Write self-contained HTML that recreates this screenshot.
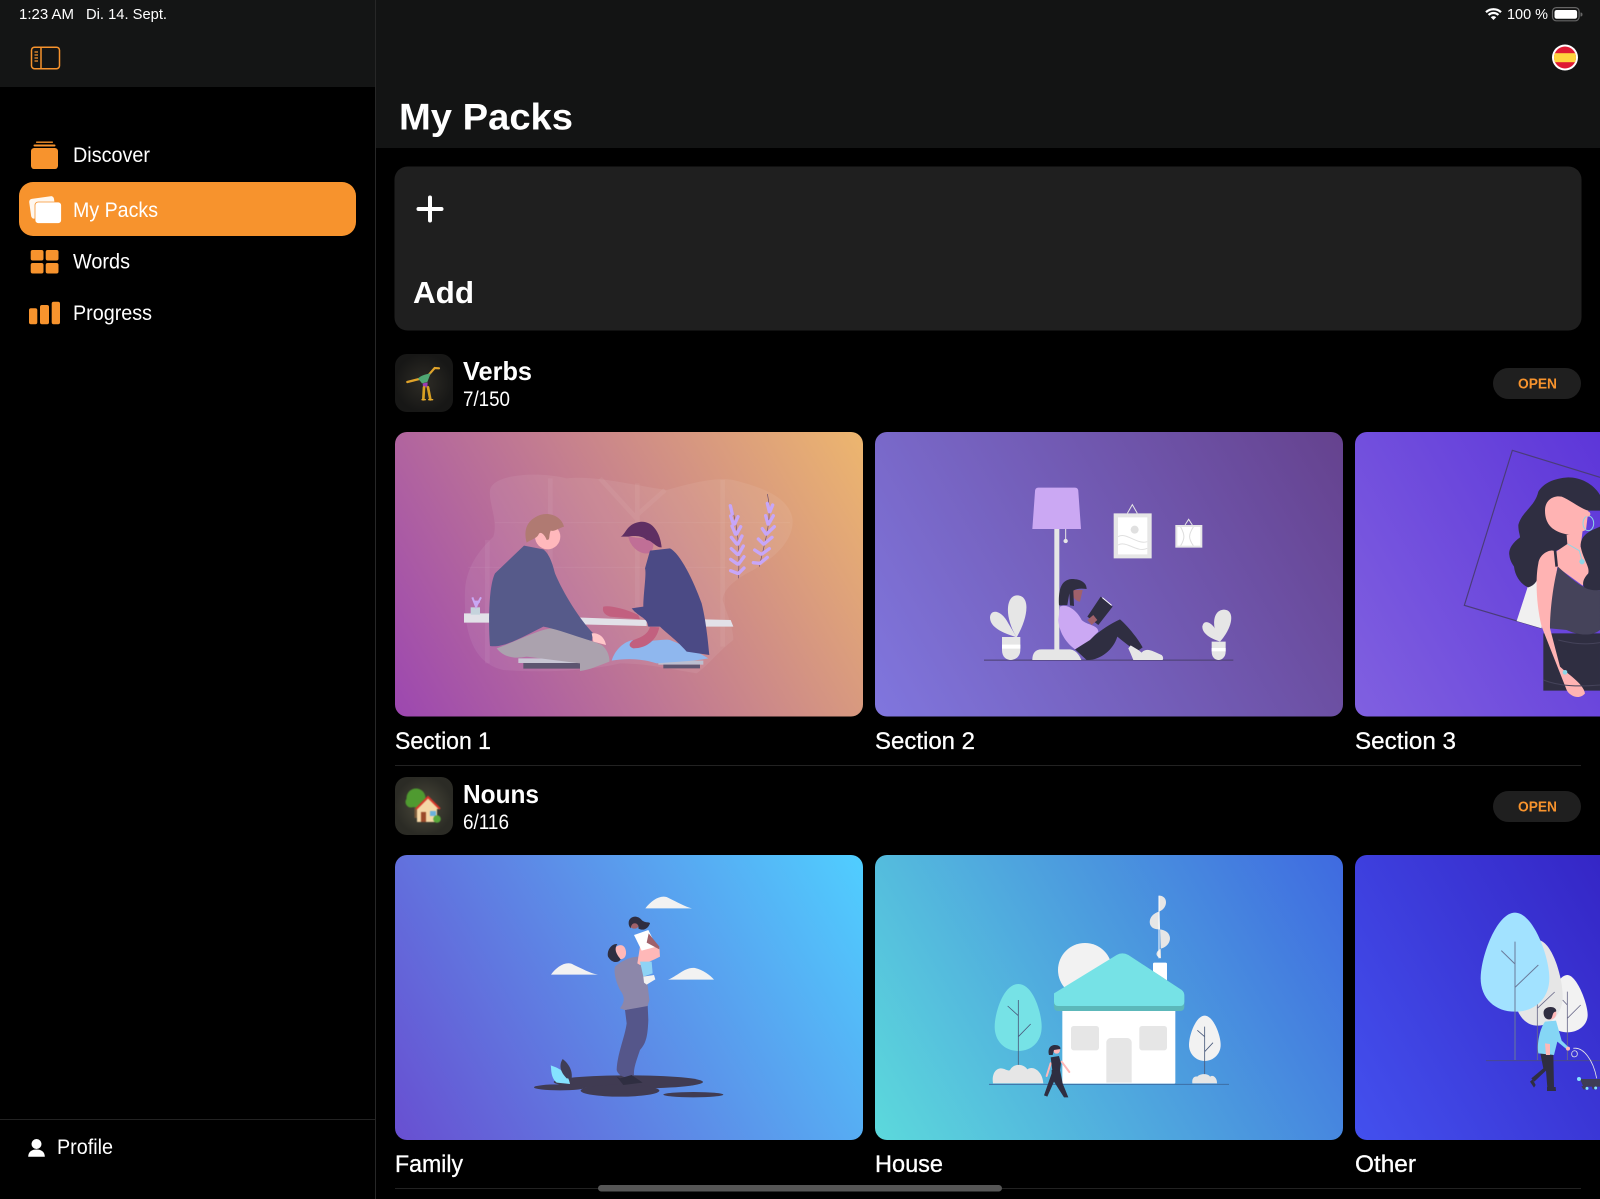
<!DOCTYPE html>
<html lang="en"><head><meta charset="utf-8"><title>My Packs</title>
<style>
html,body{margin:0;padding:0;background:#000;width:1600px;height:1199px;overflow:hidden}
svg{display:block}
text{font-family:"Liberation Sans",sans-serif;fill:#fff}
.b{font-weight:700}
.m{stroke:#fff;stroke-width:.3px}
.il{filter:blur(.45px)}
</style></head><body>
<svg width="1600" height="1199" viewBox="0 0 1600 1199" xmlns="http://www.w3.org/2000/svg">
<defs>
<linearGradient id="g1" gradientUnits="userSpaceOnUse" x1="395" y1="716" x2="869" y2="442"><stop offset="0" stop-color="#9c47b0"/><stop offset="1" stop-color="#edb66e"/></linearGradient>
<linearGradient id="g2" gradientUnits="userSpaceOnUse" x1="875" y1="716" x2="1349" y2="442"><stop offset="0" stop-color="#8076de"/><stop offset="1" stop-color="#65428e"/></linearGradient>
<linearGradient id="g3" gradientUnits="userSpaceOnUse" x1="1355" y1="716" x2="1829" y2="442"><stop offset="0" stop-color="#8060e0"/><stop offset="1" stop-color="#4a1fd5"/></linearGradient>
<linearGradient id="g4" gradientUnits="userSpaceOnUse" x1="395" y1="1140" x2="869" y2="866"><stop offset="0" stop-color="#684fd1"/><stop offset="1" stop-color="#50ceff"/></linearGradient>
<linearGradient id="g5" gradientUnits="userSpaceOnUse" x1="875" y1="1140" x2="1349" y2="866"><stop offset="0" stop-color="#5cd9dc"/><stop offset="1" stop-color="#3f6ae0"/></linearGradient>
<linearGradient id="g6" gradientUnits="userSpaceOnUse" x1="1355" y1="1140" x2="1829" y2="866"><stop offset="0" stop-color="#4350ee"/><stop offset="1" stop-color="#2d0fb0"/></linearGradient>
<radialGradient id="t1"><stop offset="0" stop-color="#2e2c26"/><stop offset="1" stop-color="#171716"/></radialGradient>
<radialGradient id="t2"><stop offset="0" stop-color="#4c4a3c"/><stop offset="1" stop-color="#2b2b25"/></radialGradient>
<clipPath id="fl"><circle cx="1565" cy="57.5" r="11"/></clipPath>
</defs>

<!-- headers -->
<rect x="0" y="0" width="375" height="87" fill="#141515"/>
<rect x="376" y="0" width="1224" height="148" fill="#131414"/>
<rect x="375" y="0" width="1" height="1199" fill="#272727"/>
<rect x="0" y="1119" width="375" height="1" fill="#222"/>

<!-- status bar -->
<text x="19" y="19" font-size="15" textLength="55" lengthAdjust="spacingAndGlyphs">1:23 AM</text>
<text x="86" y="19" font-size="15" textLength="81" lengthAdjust="spacingAndGlyphs">Di. 14. Sept.</text>
<text x="1507" y="19" font-size="15" textLength="41" lengthAdjust="spacingAndGlyphs">100 %</text>
<g fill="none" stroke="#fff" stroke-width="2.2">
<path d="M1486 12.2a11 11 0 0 1 15 0"/><path d="M1488.6 15a7 7 0 0 1 9.8 0"/></g>
<path d="M1490.8 17.3a3.6 3.6 0 0 1 5.4 0l-2.7 2.7z" fill="#fff"/>
<rect x="1552.5" y="7.6" width="26.6" height="13.2" rx="3.8" fill="none" stroke="#666" stroke-width="1.2"/>
<rect x="1554.500" y="10" width="22.6" height="8.800" rx="2.2" fill="#fff"/>
<path d="M1580.5 12.5a2 2 0 0 1 0 4z" fill="#666"/>

<!-- sidebar toggle -->
<rect x="31.5" y="47.2" width="28" height="21.5" rx="3" fill="none" stroke="#f7932d" stroke-width="1.5"/>
<path d="M41 47v22" stroke="#f7932d" stroke-width="1.5"/>
<path d="M34.5 52h3.5M34.5 55h3.5M34.5 58h3.5M34.5 61h3.5" stroke="#f7932d" stroke-width="1.2"/>

<!-- flag -->
<circle cx="1565" cy="57.5" r="13" fill="#fff"/>
<g clip-path="url(#fl)"><rect x="1553" y="46" width="24" height="24" fill="#de1a33"/><rect x="1553" y="53.200" width="24" height="9" fill="#ffd43e"/></g>

<!-- title -->
<text x="399" y="129.5" class="b" font-size="37" textLength="174" lengthAdjust="spacingAndGlyphs">My Packs</text>

<!-- sidebar nav -->
<rect x="19" y="182" width="337" height="54" rx="14" fill="#f7932d"/>
<rect x="36" y="141.5" width="17" height="1.4" rx=".7" fill="#f7932d"/>
<rect x="33.5" y="144.5" width="22" height="2" rx="1" fill="#f7932d"/>
<rect x="31" y="148" width="27" height="21" rx="3.2" fill="#f7932d"/>
<text x="73" y="162" font-size="21" textLength="77" lengthAdjust="spacingAndGlyphs">Discover</text>
<rect x="30" y="197.5" width="25" height="20" rx="3" fill="#fff" opacity=".92" transform="rotate(-8 42 207)"/>
<rect x="35" y="202" width="26.5" height="21.5" rx="3.2" fill="#fff" stroke="#f7932d" stroke-width=".8"/>
<text x="73" y="217" font-size="21" fill="#fff" textLength="85" lengthAdjust="spacingAndGlyphs">My Packs</text>
<g fill="#f7932d">
<rect x="30.7" y="250" width="12.8" height="10.5" rx="2"/><rect x="45.7" y="250" width="12.8" height="10.5" rx="2"/>
<rect x="30.7" y="263" width="12.8" height="10.5" rx="2"/><rect x="45.7" y="263" width="12.8" height="10.5" rx="2"/>
<rect x="29" y="308.3" width="8.3" height="16" rx="2"/><rect x="40" y="305" width="9" height="19.3" rx="2"/><rect x="51.7" y="301.7" width="8.3" height="22.6" rx="2"/>
</g>
<text x="73" y="268.500" font-size="21" textLength="57" lengthAdjust="spacingAndGlyphs">Words</text>
<text x="73" y="320" font-size="21" textLength="79" lengthAdjust="spacingAndGlyphs">Progress</text>

<!-- profile -->
<circle cx="36.5" cy="1144" r="5" fill="#fff"/>
<path d="M28.2 1156.7c0-5 3.6-7.2 8.3-7.2s8.3 2.2 8.3 7.2z" fill="#fff"/>
<text x="57" y="1154" font-size="21" textLength="56" lengthAdjust="spacingAndGlyphs">Profile</text>

<!-- add card -->
<rect x="394.5" y="166.5" width="1187" height="164" rx="13" fill="#1f1f1f"/>
<path d="M430 197.500v23M418.500 209h23" stroke="#fff" stroke-width="4" stroke-linecap="round"/>
<text x="413" y="303" class="b" font-size="31" textLength="61" lengthAdjust="spacingAndGlyphs">Add</text>

<!-- Verbs row -->
<rect x="395" y="354" width="58" height="58" rx="12" fill="url(#t1)"/>
<g transform="translate(390 350) scale(.33333)" class="il" fill="none" stroke-linecap="round">
<path d="M52 96L92 86" stroke="#e0a32a" stroke-width="7"/>
<path d="M115 76L134 54L147 55" stroke="#e0a32a" stroke-width="6.500"/>
<path d="M84 85C95 75 110 72 122 70L112 96L96 100Z" fill="#4fa873"/>
<path d="M98 100L113 97L112 112L99 112Z" fill="#9a3eb0"/>
<path d="M102 112L100 148M114 112L121 148" stroke="#d8a022" stroke-width="8"/>
<path d="M96 149H106M116 149H128" stroke="#e6aa2c" stroke-width="4"/>
</g>
<text x="463" y="380" class="b" font-size="26" textLength="69" lengthAdjust="spacingAndGlyphs">Verbs</text>
<text x="463" y="406" font-size="21" textLength="47" lengthAdjust="spacingAndGlyphs">7/150</text>
<rect x="1493" y="368" width="88" height="31" rx="15.5" fill="#1f1f1f"/>
<text x="1518" y="388.500" class="b" font-size="14.500" style="fill:#f7932d" textLength="39" lengthAdjust="spacingAndGlyphs">OPEN</text>

<!-- Card 1 -->
<rect x="395" y="432" width="468" height="284.500" rx="12" fill="url(#g1)"/>
<g transform="translate(380 340) scale(.33333)" class="il">
<path d="M330 450C340 400 480 395 560 415C650 405 780 440 860 450C930 430 1010 410 1060 420C1140 440 1230 470 1238 540C1240 600 1190 650 1120 690C1060 720 1030 750 1028 780C1040 820 1060 860 1060 900C1020 930 980 980 950 1000C880 990 800 970 720 970C640 990 500 1000 370 990C280 970 250 880 255 750C260 670 310 620 340 590C355 540 325 490 330 450Z" fill="#fff" opacity=".07"/>
<g stroke="#fff" stroke-opacity=".05" stroke-width="14" fill="none"><path d="M511 415V830M772 430V830M1028 420V920M322 600V970M660 415L765 530L855 450"/><path d="M345 548H1230M265 682H1040" stroke-width="3"/></g>
<path d="M252 820H330V848H252Z" fill="#e2e1e8"/>
<path d="M475 828L800 840V858L475 850ZM975 838L1052 840L1060 860H975Z" fill="#e2e1e8"/>
<path d="M272 802H300V824H272Z" fill="#c5d3dc"/>
<path d="M277 772L288 800L303 772M290 800V782M280 785L300 785" stroke="#c9a8f4" stroke-width="6" fill="none"/>
<path d="M415 955H613V969H415Z" fill="#c8c6d4"/><path d="M430 969H600V986H430Z" fill="#5d5570"/>
<path d="M835 962H970V974H835Z" fill="#bcbfd0"/><path d="M850 974H960V985H850Z" fill="#5d5570"/>
<path d="M350 925C420 900 480 865 520 865C570 880 630 900 665 915C680 925 690 950 688 965C660 975 630 990 600 993L600 970L440 950C400 958 370 950 350 925Z" fill="#aba2ae"/>
<circle cx="503" cy="590" r="38" fill="#ffb8bc"/>
<path d="M432 617L345 700C325 740 325 860 330 918C370 925 430 890 490 860C540 870 590 890 635 903L640 880C600 840 550 760 525 700C515 660 505 640 490 628Z" fill="#565a8a"/>
<path d="M635 880C650 878 672 885 678 915L640 905Z" fill="#ffc6c9"/>
<path d="M440 608C430 570 440 540 480 525C510 515 545 530 552 560C535 565 525 575 512 572C505 590 512 600 500 600C495 585 480 570 475 585C470 595 450 600 440 608Z" fill="#b07a72"/>
<path d="M670 800C690 795 740 808 775 825L780 838L690 830C675 825 665 815 670 800Z" fill="#c2607f"/>
<path d="M745 590C750 620 780 645 805 640C820 635 825 610 815 598Z" fill="#c06f96"/>
<path d="M722 590C735 585 740 555 770 548C810 535 840 570 845 622C830 625 815 600 800 600C790 590 770 585 745 590Z" fill="#5f2f63"/>
<path d="M695 962C705 930 730 905 760 900C800 910 850 895 870 900C920 920 960 940 985 955C930 965 880 965 830 970C780 955 740 955 695 962Z" fill="#8fb7ee"/>
<path d="M810 632L870 625C900 640 940 720 965 790C980 850 985 920 988 945L920 935C890 900 860 880 840 860L805 860C800 830 780 835 755 805L790 800C790 760 800 700 795 685Z" fill="#4b4a85"/>
<path d="M810 860L838 862C830 900 800 925 760 925C745 920 745 910 760 900C790 890 805 880 810 860Z" fill="#c2607f"/>
<path d="M1075 715C1080 640 1075 560 1052 492M1138 680C1150 620 1180 540 1162 462" stroke="#6e4f70" stroke-width="2" fill="none"/>
<path d="M1072 700L1052 692M1076 700L1092 684M1072 672L1052 658M1076 672L1092 650M1072 643L1054 626M1076 643L1090 618M1070 612L1054 592M1074 612L1086 588M1066 582L1056 558M1070 582L1082 560M1060 552L1052 528M1064 552L1074 530M1057 522L1051 497M1138 670L1120 668M1140 670L1162 652M1142 642L1124 630M1146 642L1168 626M1150 612L1135 597M1152 612L1176 592M1158 582L1147 566M1160 582L1183 560M1164 552L1157 527M1166 552L1180 527M1168 515L1162 490M1170 515L1178 495" stroke="#c7a6f8" stroke-width="10" stroke-linecap="round"/>
</g>
<text x="395" y="749" font-size="24" class="m" textLength="96" lengthAdjust="spacingAndGlyphs">Section 1</text>

<!-- Card 2 -->
<rect x="875" y="432" width="468" height="284.500" rx="12" fill="url(#g2)"/>
<g transform="translate(860 420) scale(.33333)" class="il">
<path d="M372 720.500H1120" stroke="#4a3f6e" stroke-width="3"/>
<path d="M535 203H645Q655 203 655 215L663 327H517L525 215Q525 203 535 203Z" fill="#cba8f3"/>
<path d="M583 327H598V692H583Z" fill="#e6e6e6"/><path d="M617 327V358" stroke="#e6e6e6" stroke-width="3"/><circle cx="617" cy="363" r="6.500" fill="#e6e6e6"/>
<path d="M517 720C517 700 525 688 545 688H630C650 690 660 710 664 720Z" fill="#e6e6e6"/>
<path d="M802 280L817 254L832 280" stroke="#e6e6e6" stroke-width="3" fill="none"/>
<path d="M761 280H875V415H761Z" fill="#e6e6e6"/><path d="M774 292H862V403H774Z" fill="#fff"/>
<circle cx="824" cy="329" r="12" fill="#e0e0e0"/>
<path d="M774 350C800 335 830 375 862 365M774 375C800 360 830 400 862 385" stroke="#e0e0e0" stroke-width="3" fill="none"/>
<path d="M975 315L986 298L997 315" stroke="#e6e6e6" stroke-width="3" fill="none"/>
<path d="M946 315H1027V383H946Z" fill="#e6e6e6"/><path d="M952 321H1021V377H952Z" fill="#fff"/>
<path d="M962 321C975 345 975 355 962 377M1000 321C985 345 985 355 1000 377" stroke="#ddd" stroke-width="3" fill="none"/>
<path d="M470 652C432 590 438 528 470 526C512 525 506 590 470 652Z" fill="#e6e6e6"/>
<path d="M470 652C435 640 390 625 390 592C392 565 425 570 445 610Z" fill="#e6e6e6"/>
<path d="M426 651H481V690C481 710 465 720 453 720C438 720 426 710 426 690Z" fill="#e6e6e6"/><path d="M426 674H481V686H426Z" fill="#fff"/>
<path d="M1080 665C1052 620 1058 570 1092 569C1125 570 1120 620 1080 665Z" fill="#e6e6e6"/>
<path d="M1080 665C1052 655 1027 642 1027 620C1030 598 1052 603 1068 630Z" fill="#e6e6e6"/>
<path d="M1055 665H1097V695C1097 712 1085 720 1076 720C1065 720 1055 712 1055 695Z" fill="#e6e6e6"/><path d="M1055 684H1097V694H1055Z" fill="#fff"/>
<path d="M645 688C690 660 730 620 780 598C800 615 830 650 848 682L830 695C810 680 790 665 772 650C760 690 720 722 680 720Z" fill="#2f2e41"/>
<path d="M812 676L835 690L845 698C860 680 880 695 905 705Q912 712 908 720H820Q812 700 805 685Z" fill="#e6e6e6"/>
<path d="M636 510C632 530 650 545 660 545L668 510Z" fill="#a0616a"/>
<path d="M597 556C595 515 600 480 635 477C665 477 680 490 680 507C665 505 650 505 640 512L642 558L630 556L628 520L622 555Z" fill="#2f2e41"/>
<path d="M600 560C620 550 650 570 665 600C680 615 715 615 715 635L690 660L645 688C620 670 598 640 595 600Z" fill="#cba8f3"/>
<path d="M682 590L722 530L758 560L715 615Z" fill="#2f2e41"/><path d="M727 533L755 556" stroke="#fff" stroke-width="3"/>
<path d="M682 600L700 585L712 600L695 615Z" fill="#a0616a"/>
</g>
<text x="875" y="749" font-size="24" class="m" textLength="100" lengthAdjust="spacingAndGlyphs">Section 2</text>

<!-- Card 3 -->
<path d="M1600 432H1367a12 12 0 0 0-12 12V704.500a12 12 0 0 0 12 12H1600Z" fill="url(#g3)"/>
<g transform="translate(1340 420) scale(.33333)" class="il">
<path d="M780 172L517 91L373 556L605 625" fill="none" stroke="#4a3c78" stroke-width="3.500"/>
<path d="M565 495L530 603L605 625L610 470Z" fill="#f0f0f0"/>
<path d="M610 640V812H780V640Z" fill="#2f2e41"/>
<path d="M780 225C760 190 720 172 685 172C640 175 610 190 595 215C585 260 545 275 535 315C535 335 540 345 540 352C515 370 505 390 508 405C510 425 520 435 522 440C525 470 545 495 565 502C590 495 600 470 595 440C610 395 650 395 685 378L745 272L780 272Z" fill="#2f2e41"/>
<path d="M680 345L728 330L722 380C740 420 750 440 745 460L728 497L650 440L648 395L682 372Z" fill="#ffb3b3"/>
<path d="M615 272C615 240 640 225 665 230C690 240 720 265 745 272L738 330C720 336 705 345 680 343C640 335 615 315 615 272Z" fill="#ffb3b3"/>
<path d="M780 320C760 330 720 340 722 380C730 420 750 440 745 460C725 480 725 500 740 510C760 515 780 510 780 510Z" fill="#2f2e41"/>
<path d="M595 430C600 395 640 385 645 395L652 440L630 625L660 740C680 760 730 790 735 820C720 840 690 830 680 810L605 620C590 560 585 480 595 430Z" fill="#ffb3b3"/>
<path d="M654 440C680 465 710 490 730 500C750 515 780 510 780 510V630C750 655 700 640 680 630L630 625C630 570 640 490 654 440Z" fill="#45435a"/>
<path d="M645 390L650 440" stroke="#2f2e41" stroke-width="8"/>
<path d="M780 668C740 675 700 672 655 660M610 780C660 800 720 800 780 795" stroke="#45435a" stroke-width="3" fill="none"/>
<path d="M683 372L718 392L726 422" stroke="#8ed6e6" stroke-width="3" fill="none"/><circle cx="726" cy="425" r="8" fill="#8ed6e6"/>
<ellipse cx="745" cy="310" rx="16" ry="22" fill="none" stroke="#8ed6e6" stroke-width="3"/>
<circle cx="743" cy="282" r="8" fill="#ffb3b3"/><circle cx="675" cy="757" r="7" fill="#8ed6e6"/>
</g>
<text x="1355" y="749" font-size="24" class="m" textLength="101" lengthAdjust="spacingAndGlyphs">Section 3</text>

<rect x="395" y="765" width="1186" height="1" fill="#222"/>

<!-- Nouns row -->
<rect x="395" y="777" width="58" height="58" rx="12" fill="url(#t2)"/>
<g class="il">
<circle cx="416" cy="798" r="9.500" fill="#4f9a30"/><circle cx="411" cy="802" r="5.500" fill="#4f9a30"/>
<path d="M416 808v10" stroke="#7a5a3a" stroke-width="3"/>
<path d="M417 809L428 797L440 809H437V822H417Z" fill="#f5d7a6"/>
<path d="M416 809L428 797L440 809" fill="none" stroke="#d8352a" stroke-width="2"/>
<path d="M421 812H426V822H421Z" fill="#9b4a2a"/><path d="M430 811H436V816H430Z" fill="#6ab0dc"/>
<circle cx="437" cy="819" r="3.800" fill="#57a83a"/>
</g>
<text x="463" y="803" class="b" font-size="26" textLength="76" lengthAdjust="spacingAndGlyphs">Nouns</text>
<text x="463" y="829" font-size="21" textLength="46" lengthAdjust="spacingAndGlyphs">6/116</text>
<rect x="1493" y="791" width="88" height="31" rx="15.500" fill="#1f1f1f"/>
<text x="1518" y="811.500" class="b" font-size="14.500" style="fill:#f7932d" textLength="39" lengthAdjust="spacingAndGlyphs">OPEN</text>

<!-- Card 4 -->
<rect x="395" y="855" width="468" height="285" rx="12" fill="url(#g4)"/>
<g transform="translate(380 760) scale(.33333)" class="il">
<path d="M796 445C815 420 845 400 868 415C890 425 915 440 936 445Z" fill="#f2f2f2"/>
<path d="M513 644C530 620 560 600 582 615C605 625 630 640 654 644Z" fill="#f2f2f2"/>
<path d="M864 659C890 650 915 620 945 624C970 630 990 645 1002 659Z" fill="#f2f2f2"/>
<g fill="#403b52"><ellipse cx="745" cy="966" rx="224" ry="20"/><ellipse cx="540" cy="982" rx="78" ry="9"/><ellipse cx="720" cy="992" rx="118" ry="18"/><ellipse cx="940" cy="1004" rx="90" ry="8"/></g>
<path d="M530 968C510 950 515 925 512 916C540 925 565 940 570 972Z" fill="#85e2ff"/>
<path d="M560 955C535 930 540 910 548 897C565 910 578 930 575 955Z" fill="#3f3d56"/>
<path d="M735 750L803 735L805 780C803 830 798 850 780 870C770 900 760 925 762 945C745 960 715 950 710 930C712 880 735 830 740 790Z" fill="#55568a"/>
<path d="M720 955L755 945L788 968L730 975L710 950Z" fill="#2f2e41"/>
<path d="M705 620C740 590 770 590 778 590L800 650L808 720L803 738L735 750L720 745C735 725 735 710 720 690C710 670 700 640 705 620Z" fill="#8c87aa"/>
<path d="M772 610L780 560L838 560L840 590C820 600 800 610 780 615Z" fill="#ffb8b8"/>
<path d="M780 605H815L818 640L790 650Z" fill="#8ed3f5"/>
<path d="M790 650L822 645L826 658L800 674L792 668Z" fill="#f2f2f2"/>
<path d="M762 525L805 510L830 560L785 572Z" fill="#fff"/>
<path d="M806 520L838 560L838 568L800 548Z" fill="#a0616a"/>
<circle cx="763" cy="490" r="16" fill="#a0616a"/>
<path d="M746 490C745 470 770 462 785 480C795 490 810 485 810 490C805 505 790 515 775 505C780 490 755 480 752 505C748 500 746 495 746 490Z" fill="#2f2e41"/>
<path d="M700 568C715 550 735 550 738 575C740 595 725 600 718 596Z" fill="#ffb8b8"/>
<path d="M712 552C695 550 680 570 684 590C695 610 715 610 722 598C712 585 700 570 712 552Z" fill="#2f2e41"/>
</g>
<text x="395" y="1172" font-size="24" class="m" textLength="68" lengthAdjust="spacingAndGlyphs">Family</text>

<!-- Card 5 -->
<rect x="875" y="855" width="468" height="285" rx="12" fill="url(#g5)"/>
<g transform="translate(860 850) scale(.33333)" class="il">
<path d="M387 703H1107" stroke="#3c6ea4" stroke-width="3"/>
<path d="M897 137C925 137 925 175 897 185C860 195 860 240 897 238C940 240 940 285 903 296C885 305 885 320 903 325Z" fill="#e6e6e6"/>
<path d="M897 137V325" stroke="#fff" stroke-width="3"/>
<circle cx="675" cy="360" r="81" fill="#f2f2f2"/>
<rect x="879" y="338" width="42" height="70" rx="4" fill="#fff"/>
<rect x="607" y="470" width="339" height="231" rx="3" fill="#fff"/>
<rect x="633" y="528" width="84" height="73" rx="8" fill="#e6e6e6"/><rect x="838" y="528" width="83" height="73" rx="8" fill="#e6e6e6"/>
<path d="M739 580a14 14 0 0 1 14-16h48a14 14 0 0 1 14 16V698H739Z" fill="#e6e6e6"/>
<path d="M582 440L770 315Q787 305 805 315L965 420Q973 426 973 440V470Q973 483 960 483H595Q582 483 582 470Z" fill="#5cb8ba"/>
<path d="M582 430L770 315Q787 305 805 315L965 420Q973 426 973 437V455Q973 468 960 468H595Q582 468 582 455Z" fill="#76e2e6"/>
<path d="M475 402C520 402 545 490 545 530C545 575 515 603 475 603C435 603 404 575 404 530C404 490 430 402 475 402Z" fill="#76e2e6"/>
<path d="M475 450V660M475 497L443 468M475 560L512 522" stroke="#4a5a7c" stroke-width="2.500" fill="none"/>
<path d="M399 700C395 675 405 655 423 655C435 655 445 665 450 660C460 640 490 640 502 658C520 645 548 665 550 700Z" fill="#e6e6e6"/>
<path d="M1034 497C1060 497 1082 555 1082 585C1082 612 1060 633 1034 633C1008 633 987 612 987 585C987 555 1008 497 1034 497Z" fill="#f2f2f2"/>
<path d="M1034 530V680M1034 560L1012 541M1034 605L1059 578" stroke="#4a5a7c" stroke-width="2.500" fill="none"/>
<path d="M997 700C995 685 1003 677 1012 680C1020 670 1045 670 1050 680C1060 672 1072 685 1071 700Z" fill="#e6e6e6"/>
<path d="M572 640L560 678M605 635L628 666" stroke="#ffb8b8" stroke-width="6" stroke-linecap="round"/>
<path d="M575 660L600 660L608 700L625 742H612L582 695L562 740L552 736L575 670Z" fill="#2f2e41"/>
<circle cx="590" cy="601" r="10" fill="#ffb8b8"/>
<path d="M567 615C562 595 572 585 585 585C595 585 603 590 601 597L582 600L578 615Z" fill="#2f2e41"/>
<path d="M572 622L597 618L603 640L600 662L577 662Z" fill="#2f2e41"/>
</g>
<text x="875" y="1172" font-size="24" class="m" textLength="68" lengthAdjust="spacingAndGlyphs">House</text>

<!-- Card 6 -->
<path d="M1600 855H1367a12 12 0 0 0-12 12V1128a12 12 0 0 0 12 12H1600Z" fill="url(#g6)"/>
<g transform="translate(1340 780) scale(.33333)" class="il">
<path d="M438 842H780" stroke="#4a4a8c" stroke-width="3"/>
<path d="M682 585C710 585 743 670 743 705C743 735 715 757 682 757C650 757 620 735 620 705C620 670 650 585 682 585Z" fill="#f2f2f2"/>
<path d="M682 635V840M682 675L668 660M682 715L722 675" stroke="#6a6a8a" stroke-width="2.500" fill="none"/>
<path d="M592 480C635 480 668 590 668 650C668 700 635 737 592 737C555 737 525 700 525 650C525 590 555 480 592 480Z" fill="#e6e6e6"/>
<path d="M592 670V840M592 685L644 636" stroke="#6a6a8a" stroke-width="2.500" fill="none"/>
<path d="M525 398C580 398 628 530 628 595C628 655 585 695 525 695C465 695 422 655 422 595C422 530 470 398 525 398Z" fill="#a2e2ff"/>
<path d="M525 485V840M525 552L484 512M525 622L595 555" stroke="#6a7a9a" stroke-width="3" fill="none"/>
<path d="M601 820L640 822L642 922H622L618 872L583 905L574 895L610 865Z" fill="#2f2e41"/>
<path d="M570 905L578 898L587 915L582 923Z" fill="#2f2e41"/><path d="M621 921H647L648 933H621Z" fill="#2f2e41"/>
<path d="M615 725L648 722L665 782L690 806L685 812L652 785L642 825L595 820C590 790 600 745 615 725Z" fill="#85d6f5"/>
<path d="M615 790L630 792L630 825L618 825Z" fill="#ffb8b8"/>
<circle cx="684" cy="806" r="6" fill="#ffb8b8"/>
<circle cx="630" cy="700" r="19" fill="#ffb8b8"/>
<path d="M611 702C608 685 625 678 640 682C648 685 650 692 648 695C635 695 640 715 630 718C620 720 612 712 611 702Z" fill="#2f2e41"/>
<path d="M695 822C695 810 712 808 712 822C712 832 695 835 695 822ZM700 805C730 800 760 840 770 895" fill="none" stroke="#e6e6e6" stroke-width="2.500"/>
<path d="M720 897H780V920H730Z" fill="#3f3d56"/><path d="M724 918H738L742 928H730ZM755 918H772V928H758Z" fill="#3f3d56"/>
<circle cx="717" cy="897" r="6" fill="#85e2ff"/><circle cx="741" cy="925" r="4.500" fill="#85e2ff"/><circle cx="767" cy="924" r="4.500" fill="#85e2ff"/>
</g>
<text x="1355" y="1172" font-size="24" class="m" textLength="61" lengthAdjust="spacingAndGlyphs">Other</text>

<rect x="395" y="1188" width="1186" height="1" fill="#222"/>
<rect x="598" y="1185" width="404" height="6.500" rx="3.250" fill="#565656"/>
</svg>
</body></html>
